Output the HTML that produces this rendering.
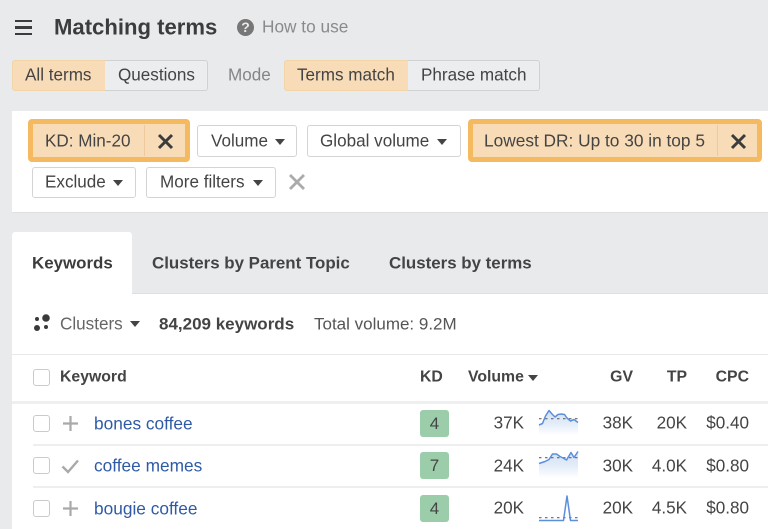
<!DOCTYPE html>
<html><head><meta charset="utf-8"><style>
html,body{margin:0;padding:0;width:768px;height:529px;overflow:hidden;background:#e9eaec}
body{position:relative;font-family:"Liberation Sans",sans-serif;color:#444;font-size:17.1px}
#w{position:absolute;left:0;top:0;width:768px;height:529px;overflow:hidden;filter:blur(.35px)}
.a{position:absolute;box-sizing:border-box}
.t{position:absolute;white-space:nowrap;line-height:20px;transform:translateY(.3px)}
.r{text-align:right}
.b{font-weight:bold}
.h{font-size:15.8px;top:366.7px}
.tab{top:253px;font-size:16.9px}
.btn{position:absolute;box-sizing:border-box;background:#fff;border:1.5px solid #d3d4d6;border-radius:3px}
.o{background:#f8dcb8}
.c{position:absolute;width:0;height:0;border-left:5.5px solid transparent;border-right:5.5px solid transparent;border-top:6px solid #444}
.cb{position:absolute;box-sizing:border-box;width:17px;height:17px;border:1.5px solid #c9cacc;border-radius:3px;background:#fff}
.l{position:absolute;height:2px;background:#eeeeef}
.k{position:absolute;left:420px;width:29px;height:27px;background:#9bcdaa;border-radius:3px;text-align:center;line-height:27px;color:#444;font-size:17px}
.kw{color:#2f5ba6;font-size:17.3px}
svg{position:absolute;left:0;top:0}
</style></head><body><div id="w">

<!-- header -->
<div class="a" style="left:15px;top:19.5px;width:17px;height:2.5px;background:#3c3c3c"></div>
<div class="a" style="left:15px;top:26px;width:17px;height:2.5px;background:#3c3c3c"></div>
<div class="a" style="left:15px;top:32.5px;width:17px;height:2.5px;background:#3c3c3c"></div>
<div class="t b" style="left:54px;top:17px;font-size:22.1px;color:#3c3c3c">Matching terms</div>
<div class="a" style="left:237px;top:18.5px;width:17px;height:17px;border-radius:50%;background:#777;color:#e9eaec;font-size:14px;font-weight:bold;text-align:center;line-height:17px">?</div>
<div class="t" style="left:262px;top:16.4px;color:#8a8a8a;font-size:17.25px">How to use</div>

<!-- segmented -->
<div class="a o" style="left:12px;top:60px;width:94px;height:31px;border:1px solid #f3d3a8;border-radius:3px 0 0 3px"></div>
<div class="a" style="left:105px;top:60px;width:103px;height:31px;border:1.5px solid #d0d1d3;border-left:0;border-radius:0 3px 3px 0;background:#ecedef"></div>
<div class="t" style="left:25px;top:65px">All terms</div>
<div class="t" style="left:118px;top:65px">Questions</div>
<div class="t" style="left:228px;top:65px;color:#858585">Mode</div>
<div class="a o" style="left:284px;top:60px;width:125px;height:31px;border:1px solid #f3d3a8;border-radius:3px 0 0 3px"></div>
<div class="a" style="left:408px;top:60px;width:132px;height:31px;border:1.5px solid #d0d1d3;border-left:0;border-radius:0 3px 3px 0;background:#ecedef"></div>
<div class="t" style="left:297px;top:65px">Terms match</div>
<div class="t" style="left:421px;top:65px">Phrase match</div>

<!-- filter panel -->
<div class="a" style="left:12px;top:111px;width:756px;height:102px;background:#fff;border-bottom:1px solid #dedfe1"></div>

<div class="a o" style="left:28px;top:119px;width:162px;height:43px;border:5.5px solid #f5b95f;border-radius:4px"></div>
<div class="a" style="left:144px;top:125px;width:1px;height:31px;background:#eec99a"></div>
<div class="t" style="left:45px;top:131px">KD: Min-20</div>

<div class="btn" style="left:197px;top:125px;width:100px;height:32px"></div>
<div class="t" style="left:211px;top:131px">Volume</div>
<div class="c" style="left:275px;top:138.5px"></div>

<div class="btn" style="left:307px;top:125px;width:154px;height:32px"></div>
<div class="t" style="left:320px;top:131px">Global volume</div>
<div class="c" style="left:437px;top:138.5px"></div>

<div class="a o" style="left:468px;top:119px;width:294px;height:43px;border:5.5px solid #f5b95f;border-radius:4px"></div>
<div class="a" style="left:717px;top:125px;width:1px;height:31px;background:#eec99a"></div>
<div class="t" style="left:484px;top:130.4px;font-size:17.3px">Lowest DR: Up to 30 in top 5</div>

<div class="btn" style="left:32px;top:167px;width:104px;height:31px"></div>
<div class="t" style="left:45px;top:172px">Exclude</div>
<div class="c" style="left:113px;top:179.5px"></div>

<div class="btn" style="left:146px;top:167px;width:130px;height:31px"></div>
<div class="t" style="left:160px;top:172px">More filters</div>
<div class="c" style="left:253px;top:179.5px"></div>

<!-- tabs -->
<div class="a" style="left:132px;top:293px;width:636px;height:1px;background:#dedfe1"></div>
<div class="a" style="left:12px;top:232px;width:120px;height:62px;background:#fff;border-radius:3px 3px 0 0"></div>
<div class="a" style="left:12px;top:294px;width:756px;height:235px;background:#fff"></div>
<div class="t b tab" style="left:32px;color:#3c3c3c">Keywords</div>
<div class="t b tab" style="left:152px;color:#444">Clusters by Parent Topic</div>
<div class="t b tab" style="left:389px;color:#444">Clusters by terms</div>

<!-- cluster row -->
<div class="t" style="left:60px;top:314px;color:#666">Clusters</div>
<div class="c" style="left:130px;top:321px"></div>
<div class="t b" style="left:159px;top:314px;color:#444;font-size:17px">84,209 keywords</div>
<div class="t" style="left:314px;top:314px;color:#555;font-size:17px">Total volume: 9.2M</div>

<div class="a" style="left:12px;top:354px;width:756px;height:1px;background:#e9e9ea"></div>

<!-- table header -->
<div class="cb" style="left:33px;top:369px"></div>
<div class="t b h" style="left:60px">Keyword</div>
<div class="t b h" style="left:420px">KD</div>
<div class="t b h" style="left:468px">Volume</div>
<div class="c" style="left:528px;top:375px;border-left-width:5px;border-right-width:5px"></div>
<div class="t b r h" style="right:135px">GV</div>
<div class="t b r h" style="right:81px">TP</div>
<div class="t b r h" style="right:19px">CPC</div>
<div class="a" style="left:12px;top:401px;width:756px;height:3px;background:#efeff0"></div>

<!-- row 1 -->
<div class="cb" style="left:33px;top:415px"></div>
<div class="t kw" style="left:94px;top:413px">bones coffee</div>
<div class="k" style="top:410px">4</div>
<div class="t r" style="right:244px;top:413px">37K</div>
<div class="t r" style="right:135px;top:413px">38K</div>
<div class="t r" style="right:81px;top:413px">20K</div>
<div class="t r" style="right:19px;top:413px">$0.40</div>
<div class="l" style="left:33px;top:444px;width:735px"></div>

<!-- row 2 -->
<div class="cb" style="left:33px;top:457px"></div>
<div class="t kw" style="left:94px;top:455.4px">coffee memes</div>
<div class="k" style="top:452px">7</div>
<div class="t r" style="right:244px;top:456px">24K</div>
<div class="t r" style="right:135px;top:456px">30K</div>
<div class="t r" style="right:81px;top:456px">4.0K</div>
<div class="t r" style="right:19px;top:456px">$0.80</div>
<div class="l" style="left:33px;top:486px;width:735px"></div>

<!-- row 3 -->
<div class="cb" style="left:33px;top:500px"></div>
<div class="t kw" style="left:94px;top:498px">bougie coffee</div>
<div class="k" style="top:495px">4</div>
<div class="t r" style="right:244px;top:498px">20K</div>
<div class="t r" style="right:135px;top:498px">20K</div>
<div class="t r" style="right:81px;top:498px">4.5K</div>
<div class="t r" style="right:19px;top:498px">$0.80</div>

<svg width="768" height="529" viewBox="0 0 768 529" fill="none">
<defs>
<linearGradient id="g" x1="0" y1="0" x2="0" y2="1"><stop offset="0" stop-color="#d3e1f5"/><stop offset=".5" stop-color="#e2ebf8"/><stop offset="1" stop-color="#ffffff"/></linearGradient>
</defs>
<!-- close icons -->
<path d="M159 135L172 148M172 135L159 148" stroke="#3c3c3c" stroke-width="3"/>
<path d="M732 135L745 148M745 135L732 148" stroke="#3c3c3c" stroke-width="3"/>
<path d="M290 175L304 189M304 175L290 189" stroke="#ababab" stroke-width="2.8"/>
<!-- cluster dots -->
<circle cx="46" cy="318" r="3.8" fill="#3a3a3a"/>
<circle cx="37" cy="319" r="2" fill="#3a3a3a"/>
<circle cx="37" cy="328" r="3" fill="#3a3a3a"/>
<circle cx="46" cy="327" r="2" fill="#3a3a3a"/>
<!-- row icons -->
<path d="M63 423.5H78M70.5 416V431" stroke="#a9a9a9" stroke-width="2.2"/>
<path d="M62.5 466.5L68 472L78 460.5" stroke="#a9a9a9" stroke-width="2.4"/>
<path d="M63 508.5H78M70.5 501V516" stroke="#a9a9a9" stroke-width="2.2"/>
<!-- sparkline 1 -->
<path d="M539 425L542.5 423.5L545.5 416L549 410.5L552 414L555 417L558 414.5L561 414L564.5 414.5L567 418L570.5 421L574 419.5L578 422.5V435H539Z" fill="url(#g)"/>
<path d="M539 418.7H578" stroke="#666" stroke-width="1.1" stroke-dasharray="2.5 3.5"/>
<path d="M539 425L542.5 423.5L545.5 416L549 410.5L552 414L555 417L558 414.5L561 414L564.5 414.5L567 418L570.5 421L574 419.5L578 422.5" stroke="#5b8fdc" stroke-width="1.5" stroke-linejoin="round"/>
<!-- sparkline 2 -->
<path d="M539 463.5L545 461.5L549 459.5L552.5 454L556.5 454L560 456.5L563 458L566.5 460L571 452.5L574 457.5L578 451.5V478H539Z" fill="url(#g)"/>
<path d="M539 457.7H578" stroke="#666" stroke-width="1.1" stroke-dasharray="2.5 3.5"/>
<path d="M539 463.5L545 461.5L549 459.5L552.5 454L556.5 454L560 456.5L563 458L566.5 460L571 452.5L574 457.5L578 451.5" stroke="#5b8fdc" stroke-width="1.5" stroke-linejoin="round"/>
<!-- sparkline 3 -->
<path d="M539 517.7H578" stroke="#666" stroke-width="1.1" stroke-dasharray="2.5 3.5"/>
<path d="M539 520.5H563.5L567 496L570.5 520.5H578" stroke="#5b8fdc" stroke-width="1.5" stroke-linejoin="round"/>
</svg>
</div></body></html>
